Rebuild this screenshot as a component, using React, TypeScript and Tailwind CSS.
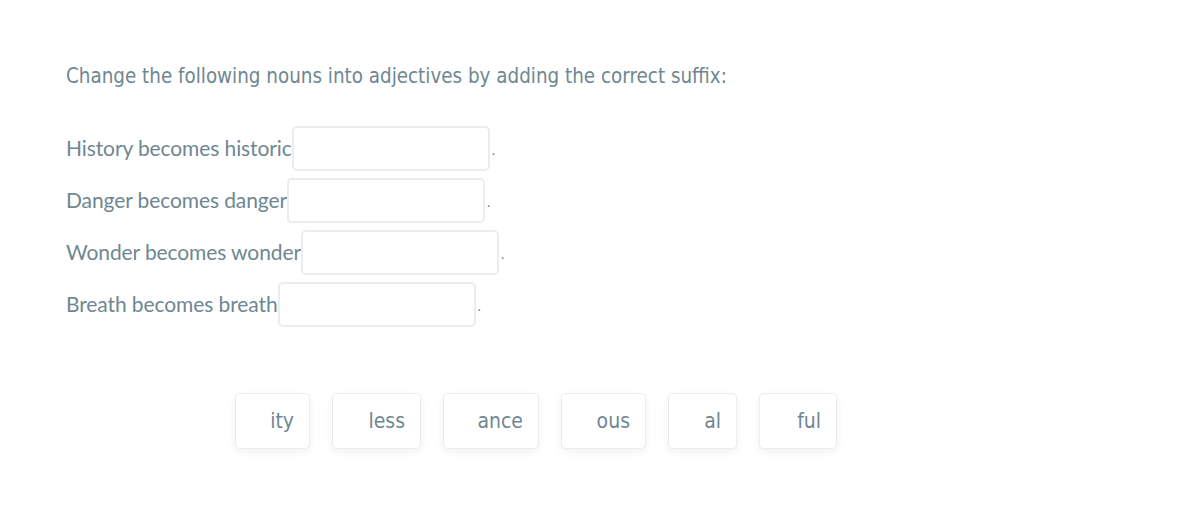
import React from "react";

const rows = [
  { text: "History becomes historic" },
  { text: "Danger becomes danger" },
  { text: "Wonder becomes wonder" },
  { text: "Breath becomes breath" },
];

const chips = [
  { label: "ity", w: "w-[75px]" },
  { label: "less", w: "w-[89px]" },
  { label: "ance", w: "w-[96px]" },
  { label: "ous", w: "w-[85px]" },
  { label: "al", w: "w-[69px]" },
  { label: "ful", w: "w-[78px]" },
];

export default function App() {
  return (
    <div className="min-h-[531px] w-[1201px] bg-white text-[#6f8791]">
      <div className="pl-[66px] pt-[62px]">
        <p className="h-[28px] text-[20.4px] leading-[28px] [font-family:'Liberation_Sans_Narrow','DejaVu_Sans_Condensed',sans-serif]">
          Change the following nouns into adjectives by adding the correct suffix:
        </p>
        <div className="mt-[36px] flex flex-col gap-[7px] [font-family:Lato,sans-serif] text-[21px] tracking-[-0.1px]">
          {rows.map((r) => (
            <div key={r.text} className="flex h-[45px] items-center">
              <span className="mb-[1px] leading-[28px]">{r.text}</span>
              <input
                type="text"
                className="h-[45px] w-[198px] rounded-[5px] border-2 border-[#ececec] bg-white outline-none"
              />
              <span className="ml-[2px] self-end mb-[14px] text-[14px] leading-none">.</span>
            </div>
          ))}
        </div>
        <div className="ml-[169px] mt-[66px] flex gap-[22px]">
          {chips.map((c) => (
            <div
              key={c.label}
              className={`${c.w} flex h-[56px] items-center justify-end rounded-[5px] border border-[#ececec] bg-white pt-[2px] pr-[15px] text-[21px] shadow-[0_3px_8px_rgba(0,0,0,0.06)] [font-family:'Liberation_Sans_Narrow','DejaVu_Sans_Condensed',sans-serif]`}
            >
              {c.label}
            </div>
          ))}
        </div>
      </div>
    </div>
  );
}
